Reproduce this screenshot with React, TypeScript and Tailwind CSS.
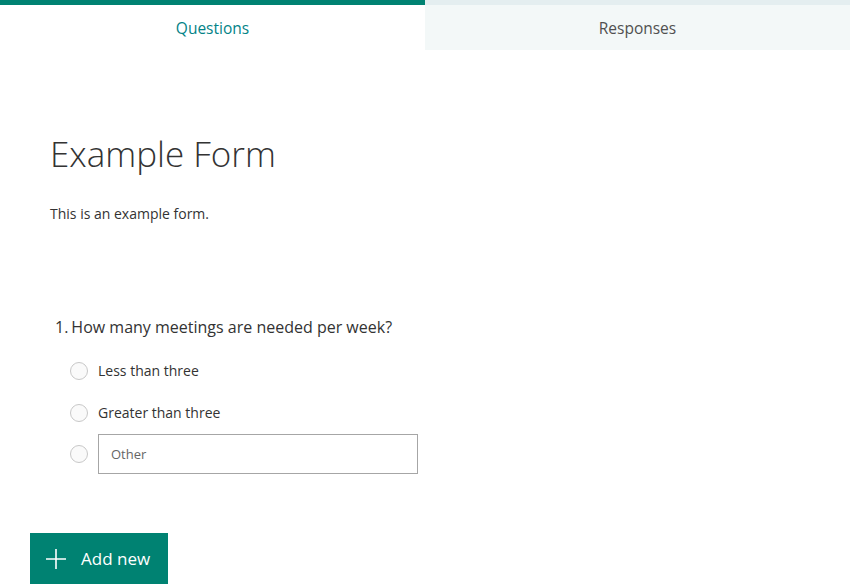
import { useState } from "react";

const OPTIONS = ["Less than three", "Greater than three"];

function Radio() {
  return (
    <span className="block h-[18px] w-[18px] shrink-0 rounded-full border border-[#c8c8c8] bg-[#fafafa]" />
  );
}

export default function App() {
  const [tab, setTab] = useState<"questions" | "responses">("questions");

  return (
    <div
      className="h-[584px] w-full overflow-hidden bg-white text-[#333]"
      style={{ fontFamily: '"Open Sans", "Noto Sans", sans-serif' }}
    >
      {/* Tabs */}
      <div className="flex h-[50px]">
        <button
          onClick={() => setTab("questions")}
          className={`flex flex-1 items-center justify-center border-t-[5px] pt-[2px] text-[15.5px] ${
            tab === "questions"
              ? "border-[#008272] bg-white text-[#038387]"
              : "border-[#e4eef0] bg-[#f3f8f8] text-[#505050]"
          }`}
        >
          Questions
        </button>
        <button
          onClick={() => setTab("responses")}
          className={`flex flex-1 items-center justify-center border-t-[5px] pt-[2px] text-[15.5px] ${
            tab === "responses"
              ? "border-[#008272] bg-white text-[#038387]"
              : "border-[#e4eef0] bg-[#f3f8f8] text-[#505050]"
          }`}
        >
          Responses
        </button>
      </div>

      {/* Form header */}
      <div className="pl-[50px] pt-[79px]">
        <h1 className="text-[35px] leading-[50px] font-light text-[#333]">Example Form</h1>
        <p className="mt-[26px] text-[14px] leading-[18px] text-[#333]">This is an example form.</p>
      </div>

      {/* Question */}
      <div className="pl-[55px] pt-[93px]">
        <div className="flex text-[16px] leading-[22px] text-[#333]">
          <span className="mr-[3px]">1.</span>
          <span>How many meetings are needed per week?</span>
        </div>
        <div className="mt-[24px] flex flex-col gap-[24px] pl-[15px]">
          {OPTIONS.map((o) => (
            <label key={o} className="flex items-center gap-[10px] text-[14px] leading-[18px] text-[#333]">
              <Radio />
              {o}
            </label>
          ))}
        </div>
        <div className="mt-[12px] flex items-center gap-[10px] pl-[15px]">
          <Radio />
          <input
            placeholder="Other"
            className="h-[40px] w-[320px] border border-[#a6a6a6] px-[12px] text-[13px] text-[#333] outline-none placeholder:text-[#666]"
          />
        </div>
      </div>

      {/* Add new */}
      <div className="pl-[30px] pt-[59px]">
        <button className="flex h-[52px] w-[138px] items-center gap-[15px] bg-[#008272] pl-[16px] text-[17px] text-white">
          <svg width="20" height="20" viewBox="0 0 20 20" fill="none" stroke="white" strokeWidth="1.6">
            <path d="M10 0v20M0 10h20" />
          </svg>
          Add new
        </button>
      </div>
    </div>
  );
}
